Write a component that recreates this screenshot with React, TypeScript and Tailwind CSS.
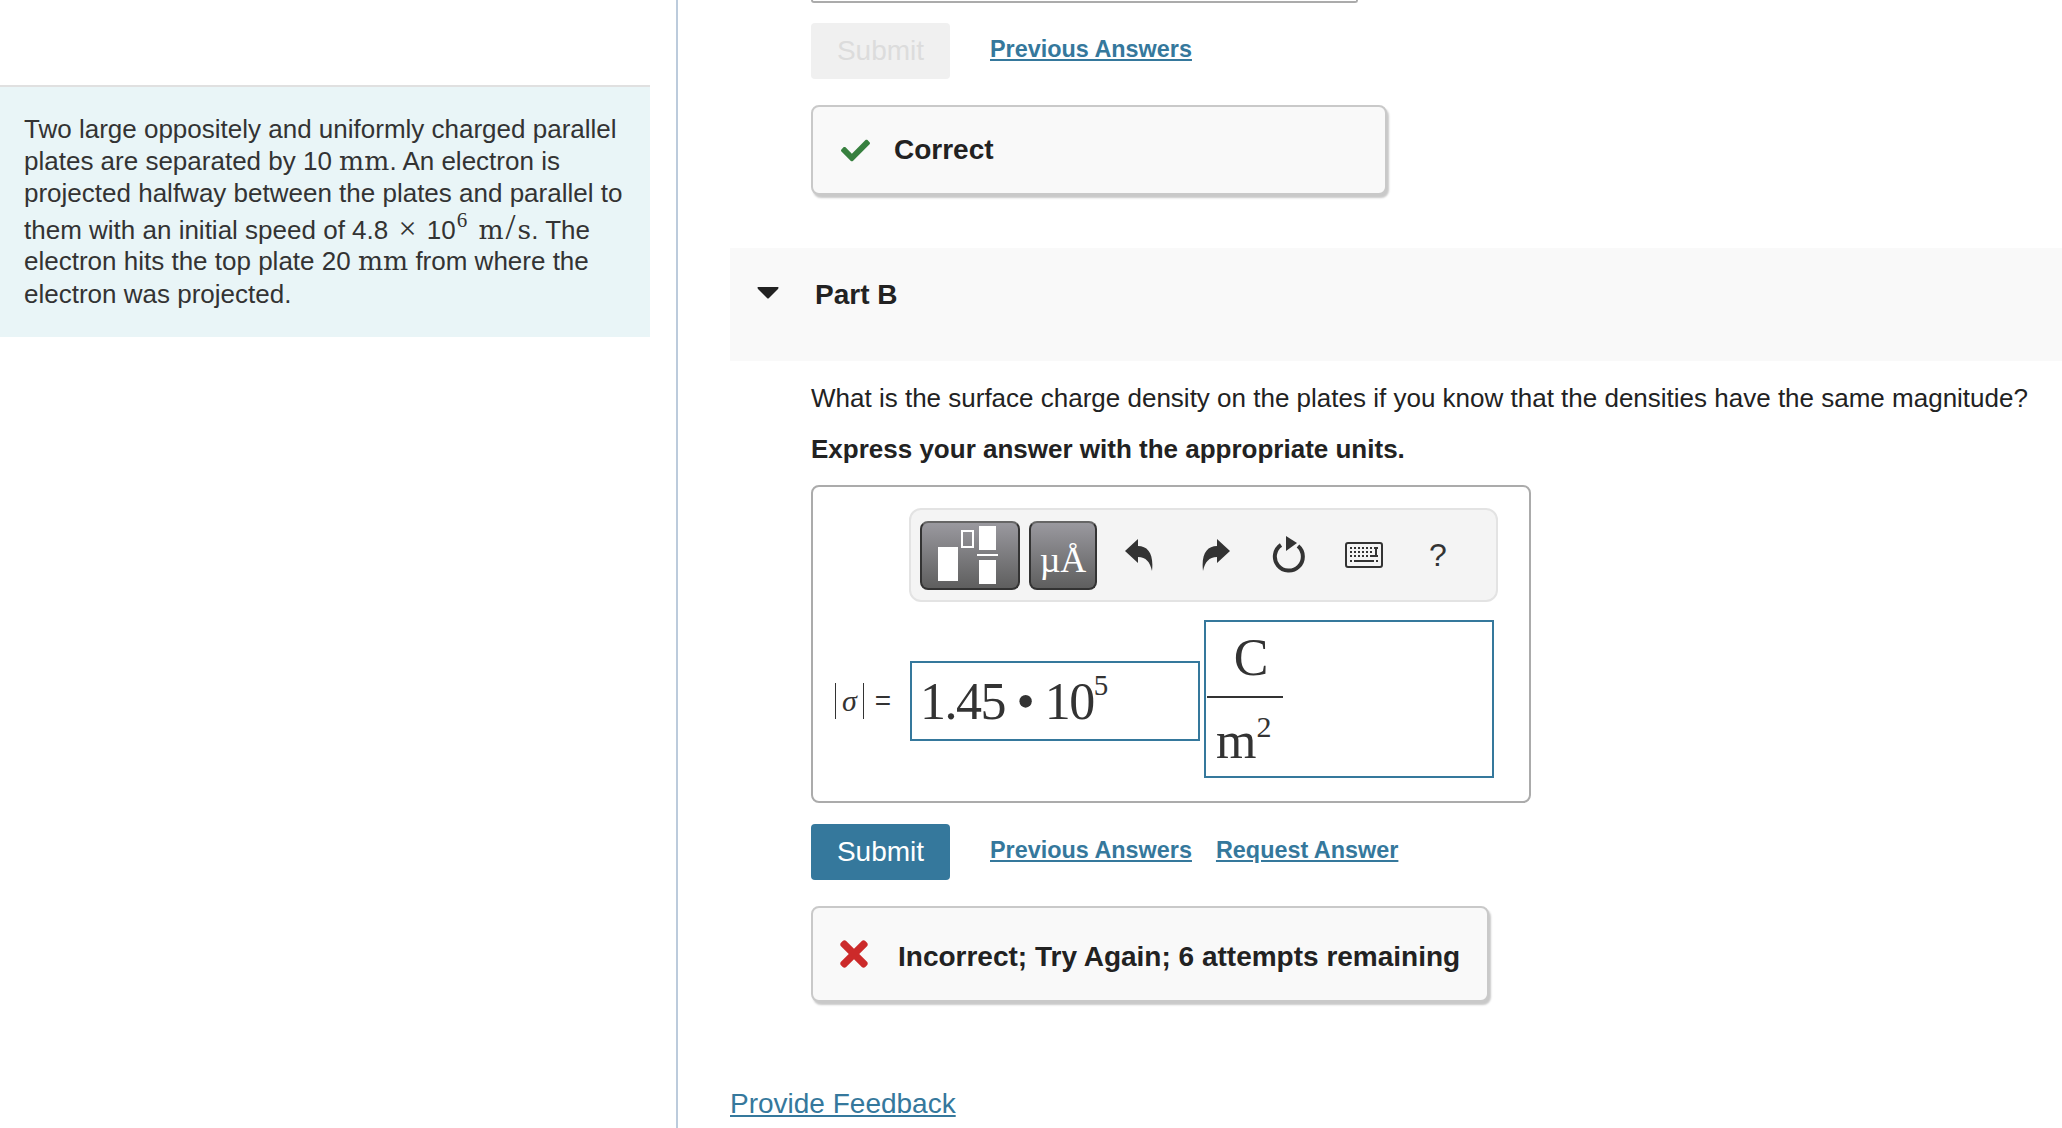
import { FaCheck, FaTimes } from "react-icons/fa";

const sans = "font-['Liberation_Sans',Arial,sans-serif]";
const serif = "font-['Liberation_Serif','Times_New_Roman',serif]";

function Mathy({ children }: { children: React.ReactNode }) {
  return <span className="font-['DejaVu_Serif',serif] text-[26.5px]">{children}</span>;
}

function ResultBox({ width, height, icon, children, textClass }: { width: string; height: string; icon: React.ReactNode; children: React.ReactNode; textClass?: string }) {
  return (
    <div className={`${width} ${height} flex items-center rounded-lg border-2 border-[#c9c9c9] bg-[#f9f9f9] pl-7 text-[28px] font-bold text-[#222] shadow-[2px_3px_2px_#c9c9c9]`}>
      {icon}
      <span className={textClass}>{children}</span>
    </div>
  );
}

function LinkText({ children }: { children: React.ReactNode }) {
  return <a className="text-[23.4px] font-bold text-[#35789c] underline underline-offset-2">{children}</a>;
}

function Toolbar() {
  return (
    <div className="ml-[96px] flex h-[94px] w-[589px] items-center rounded-xl border-2 border-[#e3e3e3] bg-[#f4f4f4] pl-[9px]">
      <div className="flex h-[69px] w-[100px] items-center justify-center rounded-lg border-2 border-[#333] border-t-[#666] bg-gradient-to-b from-[#9a999f] to-[#5f5f5f]">
        <svg width="80" height="60" viewBox="0 0 80 60">
          <rect x="8" y="22" width="20" height="34" fill="#fff" />
          <rect x="32" y="6" width="11" height="16" fill="none" stroke="#fff" strokeWidth="2" />
          <rect x="49" y="1" width="17" height="24" fill="#fff" />
          <rect x="47" y="29" width="21" height="2" fill="#fff" />
          <rect x="49" y="35" width="17" height="24" fill="#fff" />
        </svg>
      </div>
      <div className={`${serif} ml-[9px] flex h-[69px] w-[68px] items-end justify-center rounded-lg border-2 border-[#333] border-t-[#666] bg-gradient-to-b from-[#9a999f] to-[#5f5f5f] pb-[10px] text-[36px] leading-none text-white`}>
        µÅ
      </div>
      {/* undo */}
      <svg className="ml-[28px]" width="28" height="34" viewBox="0 0 28 34">
        <path d="M0 13 L13 1 L13 8 C23 8 29 16 27 33 C25 24 21 19 13 19 L13 25 Z" fill="#333" />
      </svg>
      {/* redo */}
      <svg className="ml-[49px]" width="28" height="34" viewBox="0 0 28 34">
        <path d="M28 13 L15 1 L15 8 C5 8 -1 16 1 33 C3 24 7 19 15 19 L15 25 Z" fill="#333" />
      </svg>
      {/* reset */}
      <svg className="ml-[41px]" width="34" height="40" viewBox="0 0 34 40">
        <path d="M10 10 A14 14 0 1 0 27 11" fill="none" stroke="#333" strokeWidth="4" />
        <path d="M15 1 L26 8 L15 16 Z" fill="#333" />
      </svg>
      {/* keyboard */}
      <svg className="ml-[40px]" width="38" height="26" viewBox="0 0 38 26">
        <rect x="1" y="1" width="36" height="24" rx="2" fill="none" stroke="#333" strokeWidth="2" />
        <path d="M5 6h2M9 6h2M13 6h2M17 6h2M21 6h2M25 6h2M29 6h4M5 10h2M9 10h2M13 10h2M17 10h2M21 10h2M25 10h2M31 6v8M5 14h2M9 14h2M13 14h2M17 14h2M21 14h2M25 14h8M5 19h2M9 19h20M31 19h2" stroke="#333" strokeWidth="2" />
      </svg>
      <span className={`${sans} ml-[46px] text-[32px] leading-none text-[#333]`}>?</span>
    </div>
  );
}

function AnswerRow() {
  return (
    <div className="mt-[18px] flex items-center">
      <div className={`${sans} ml-[22px] mt-[3px] flex w-[73px] shrink-0 items-center text-[26px] text-[#333]`}>
        <span className="inline-block h-[36px] border-l border-[#333]" />
        <span className={`${serif} mx-[6px] text-[30px] italic leading-none`}>σ</span>
        <span className="inline-block h-[36px] border-l border-[#333]" />
        <span className="ml-[11px] text-[28px]">=</span>
      </div>
      <div className={`${serif} ml-[2px] mt-[3px] flex h-[80px] w-[290px] items-center border-2 border-[#35789c] pl-[8px] pt-[3px] text-[52px] leading-none tracking-[-1.5px] text-[#333]`}>
        1.45 • 10<sup className="-top-[17px] text-[29px] leading-none">5</sup>
      </div>
      <div className={`${serif} ml-[4px] h-[158px] w-[290px] border-2 border-[#35789c] pt-[2px] text-[52px] leading-none text-[#333]`}>
        <div className="ml-[1px] w-[76px] border-b-2 border-[#333] pb-[12px] pl-[12px] pt-[8px] text-center">C</div>
        <div className="ml-[10px] pt-[17px]">
          m<sup className="-top-[21px] text-[30px] leading-none">2</sup>
        </div>
      </div>
    </div>
  );
}

function PartB() {
  return (
    <div className="pl-[81px]">
      <p className="mt-[22px] whitespace-nowrap text-[26px] leading-[30px] text-[#222]">
        What is the surface charge density on the plates if you know that the densities have the same magnitude?
      </p>
      <p className="mt-[21px] text-[26px] font-bold leading-[30px] text-[#222]">Express your answer with the appropriate units.</p>
      <div className="mt-[21px] h-[318px] w-[720px] rounded-lg border-2 border-[#ababab] pt-[21px]">
        <Toolbar />
        <AnswerRow />
      </div>
      <div className="mt-[21px] flex items-center">
        <button className="h-[56px] w-[139px] rounded bg-[#35789c] text-[28px] text-white">Submit</button>
        <div className="ml-[40px] flex -translate-y-[1px] gap-[24px]">
          <LinkText>Previous Answers</LinkText>
          <LinkText>Request Answer</LinkText>
        </div>
      </div>
      <div className="mt-[26px]">
        <ResultBox
          width="w-[678px]"
          height="h-[96px]"
          textClass="translate-y-[3px]"
          icon={<FaTimes className="-ml-[7px] mr-[24px] text-[#cc2a2a]" size={40} />}
        >
          Incorrect; Try Again; 6 attempts remaining
        </ResultBox>
      </div>
    </div>
  );
}

export default function App() {
  return (
    <div className={`${sans} flex h-[1128px] overflow-hidden bg-white`}>
      <aside className="h-full w-[678px] shrink-0 border-r-2 border-[#bccbdc] pt-[85px]">
        <div className="h-[252px] w-[650px] whitespace-nowrap border-t-2 border-[#e0e0e0] bg-[#e9f5f7] px-[24px] pt-[26px] text-[26px] text-[#333]">
          <p className="leading-[32px]">Two large oppositely and uniformly charged parallel</p>
          <p className="leading-[32px]">plates are separated by 10 <Mathy>mm</Mathy>. An electron is</p>
          <p className="leading-[32px]">projected halfway between the plates and parallel to</p>
          <p className="h-[35px] leading-[33px]">
            them with an initial speed of 4.8 <span className={`${serif} mx-[3px] text-[32px] leading-none`}>×</span> 10
            <sup className={`${serif} -top-[12px] ml-[1px] text-[21px]`}>6</sup>{" "}
            <span className="ml-[4px]">
              <Mathy>
                m<span className="mx-[2px] font-['Liberation_Serif',serif] text-[36px] font-light leading-none">/</span>s
              </Mathy>
            </span>
            . The
          </p>
          <p className="leading-[34px]">electron hits the top plate 20 <Mathy>mm</Mathy> from where the</p>
          <p className="leading-[32px]">electron was projected.</p>
        </div>
      </aside>
      <main className="min-w-0 flex-1 pl-[52px]">
        <div className="ml-[81px]">
          <div className="h-[3px] w-[547px] rounded-b-md border-x-2 border-b-2 border-[#ababab]" />
          <div className="mt-[20px] flex items-center">
            <button className="h-[56px] w-[139px] rounded bg-[#f0f0f0] text-[28px] text-[#dcdcdc]">Submit</button>
            <div className="ml-[40px] -translate-y-[1px]">
              <LinkText>Previous Answers</LinkText>
            </div>
          </div>
          <div className="mt-[26px]">
            <ResultBox width="w-[576px]" height="h-[90px]" icon={<FaCheck className="mr-[24px] text-[#37803f]" size={29} />}>
              Correct
            </ResultBox>
          </div>
        </div>
        <div className="mt-[53px] flex h-[113px] items-center bg-[#f9f9f9] pb-[20px] pl-[27px]">
          <svg width="22" height="12" viewBox="0 0 22 12" className="-translate-y-[2px]">
            <path d="M1 0 H21 Q22 0 21 2 L12 11 Q11 12 10 11 L1 2 Q0 0 1 0 Z" fill="#222" />
          </svg>
          <h2 className="ml-[36px] text-[28px] font-bold text-[#222]">Part B</h2>
        </div>
        <PartB />
        <a className="mt-[85px] block text-[28px] leading-[34px] text-[#35789c] underline underline-offset-2">Provide Feedback</a>
      </main>
    </div>
  );
}
